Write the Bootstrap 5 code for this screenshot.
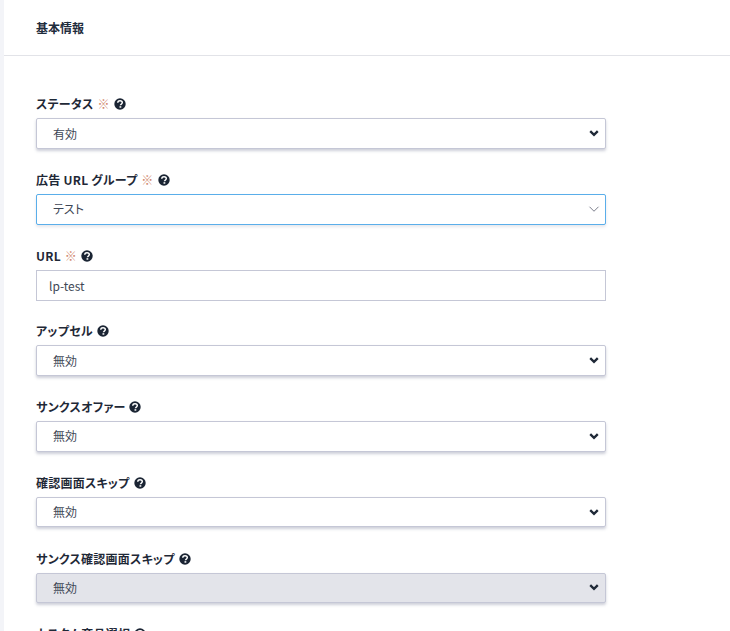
<!DOCTYPE html>
<html lang="ja">
<head>
<meta charset="utf-8">
<title>基本情報</title>
<link href="https://cdn.jsdelivr.net/npm/bootstrap@5.3.0/dist/css/bootstrap.min.css" rel="stylesheet">
<style>
html,body{height:631px;overflow:hidden}
body{background:#f3f4f8;font-family:"Noto Sans CJK JP","Noto Sans",sans-serif;color:#1f2937}
.page-panel{margin-left:4px;background:#fff;min-height:631px}
.panel-head{height:56px;padding:0 32px;border-bottom:1px solid #e2e3e8;font-size:12px;font-weight:700;color:#1f2d3d;display:flex;align-items:center}
.panel-body{padding:39.4px 32px 0}
.field{margin-bottom:22.2px;width:570px}
.field-label{display:flex;align-items:center;gap:4px;font-size:12px;font-weight:700;line-height:18px;height:18px;margin-bottom:5px;color:#1f2937;font-feature-settings:"palt";letter-spacing:.25px;white-space:pre}
.req{color:#d0856c;font-weight:400;font-size:12px}
.help-ic{width:12px;height:12px;flex:none}
.field .form-select,.field .form-control{height:30.5px;font-size:12px;line-height:18px;color:#3e4756;border-radius:2px;border:1px solid #c5c7d6;padding:0 36px 0 16px;box-shadow:0 2px 3px rgba(90,95,130,.3);background-color:#fff;font-feature-settings:"palt"}
.field .form-select{background-size:14px 11px;background-position:right 4px center;
background-image:url("data:image/svg+xml,%3csvg xmlns='http://www.w3.org/2000/svg' viewBox='0 0 16 16'%3e%3cpath fill='none' stroke='%231f2937' stroke-width='3.4' d='m2.5 4.5 5.500 5.500 5.500-5.500'/%3e%3c/svg%3e")}
.field .form-control{padding:0 12px;box-shadow:none;border-radius:0;height:31.5px;margin-bottom:-1px}
.field .form-select.is-active{border-color:#5aaeea;box-shadow:0 2px 3px rgba(90,95,130,.15);background-size:16px 12px;background-position:right 3px center;background-image:url("data:image/svg+xml,%3csvg xmlns='http://www.w3.org/2000/svg' viewBox='0 0 16 16'%3e%3cpath fill='none' stroke='%23777a88' stroke-width='1.3' d='m2 5 6 6 6-6'/%3e%3c/svg%3e")}
.field .form-select:disabled{background-color:#e3e4ea}
</style>
</head>
<body>
<svg width="0" height="0" class="position-absolute"><symbol id="q" viewBox="0 0 12 12"><circle cx="6" cy="6" r="5.700" fill="#1a2433"/><path d="M3.800 4.800C3.800 3.300 4.800 2.700 6 2.700s2.300.7 2.300 1.900c0 1.500-1.800 1.400-1.800 2.700" fill="none" stroke="#fff" stroke-width="1.500"/><rect x="5.500" y="8.200" width="1.800" height="1.500" fill="#fff"/></symbol></svg>
<main class="page-panel">
<div class="panel-head">基本情報</div>
<form class="panel-body">
<div class="field"><label class="field-label">ステータス<span class="req">※</span><svg class="help-ic"><use href="#q"/></svg></label><select class="form-select"><option>有効</option></select></div>
<div class="field"><label class="field-label">広告 URL グループ<span class="req">※</span><svg class="help-ic"><use href="#q"/></svg></label><select class="form-select is-active"><option>テスト</option></select></div>
<div class="field"><label class="field-label">URL<span class="req">※</span><svg class="help-ic"><use href="#q"/></svg></label><input class="form-control" value="lp-test"></div>
<div class="field"><label class="field-label">アップセル<svg class="help-ic"><use href="#q"/></svg></label><select class="form-select"><option>無効</option></select></div>
<div class="field"><label class="field-label">サンクスオファー<svg class="help-ic"><use href="#q"/></svg></label><select class="form-select"><option>無効</option></select></div>
<div class="field"><label class="field-label">確認画面スキップ<svg class="help-ic"><use href="#q"/></svg></label><select class="form-select"><option>無効</option></select></div>
<div class="field"><label class="field-label">サンクス確認画面スキップ<svg class="help-ic"><use href="#q"/></svg></label><select class="form-select" disabled><option>無効</option></select></div>
<div class="field"><label class="field-label">カスタム商品選択<svg class="help-ic"><use href="#q"/></svg></label></div>
</form>
</main>
<script src="https://cdn.jsdelivr.net/npm/bootstrap@5.3.0/dist/js/bootstrap.bundle.min.js"></script>
</body>
</html>
